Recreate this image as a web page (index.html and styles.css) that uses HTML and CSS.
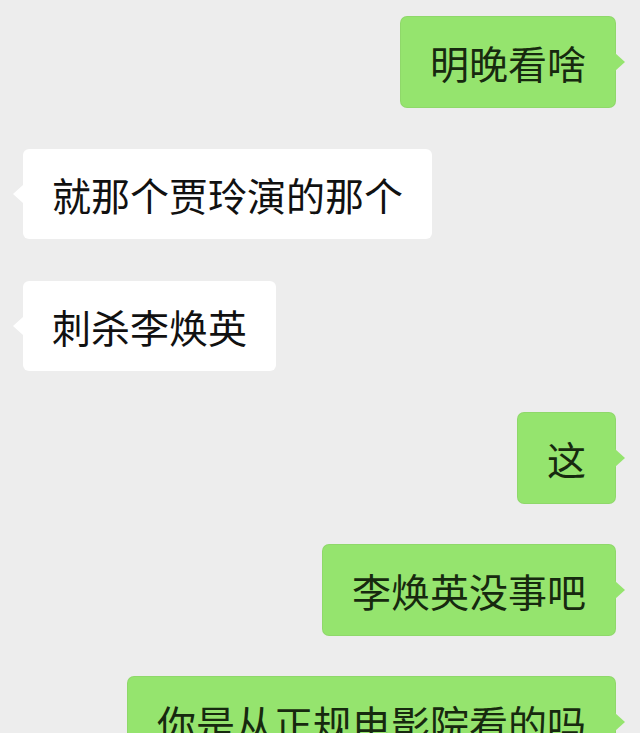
FILE: index.html
```html
<!DOCTYPE html>
<html lang="zh-CN">

<head>
  <meta charset="UTF-8">
  <meta name="viewport" content="width=device-width, initial-scale=1.0">
  <title>聊天</title>
  <link rel="stylesheet" href="styles.css">
</head>

<body>
  <div class="chat">
    <div class="row mine">
      <div class="bubble">明晚看啥</div>
    </div>
    <div class="row theirs">
      <div class="bubble">就那个贾玲演的那个</div>
    </div>
    <div class="row theirs">
      <div class="bubble">刺杀李焕英</div>
    </div>
    <div class="row mine">
      <div class="bubble">这</div>
    </div>
    <div class="row mine">
      <div class="bubble">李焕英没事吧</div>
    </div>
    <div class="row mine">
      <div class="bubble">你是从正规电影院看的吗</div>
    </div>
  </div>
</body>

</html>
```

FILE: styles.css
```css
html,
body {
  margin: 0;
  height: 100%;
  overflow: hidden;
}

body {
  background-color: #ededed;
  font-family: "Noto Sans CJK SC", "Noto Sans", sans-serif;
}

.chat {
  display: flex;
  flex-direction: column;
  gap: 42px;
  padding: 17px 25px 0 23px;
}

.row {
  display: flex;
}

.row.mine {
  justify-content: flex-end;
}

.row.theirs {
  justify-content: flex-start;
}

.bubble {
  position: relative;
  padding: 26px 29px;
  font-size: 39px;
  line-height: 38px;
  border-radius: 6px;
  white-space: nowrap;
}

.mine .bubble {
  background-color: #95e46e;
  color: #17290f;
  /* soft edge like the photo */
  box-shadow: 0 0 0 1px #8fd86a;
}

.theirs .bubble {
  background-color: #ffffff;
  color: #111;
}

/* little tail pointing at the speaker */
.bubble::after {
  content: "";
  position: absolute;
  top: 50%;
  margin-top: -9px;
  border-top: 9px solid transparent;
  border-bottom: 9px solid transparent;
}

.mine .bubble::after {
  right: -10px;
  border-left: 10px solid #95e46e;
}

.theirs .bubble::after {
  left: -10px;
  border-right: 10px solid #ffffff;
}
```
